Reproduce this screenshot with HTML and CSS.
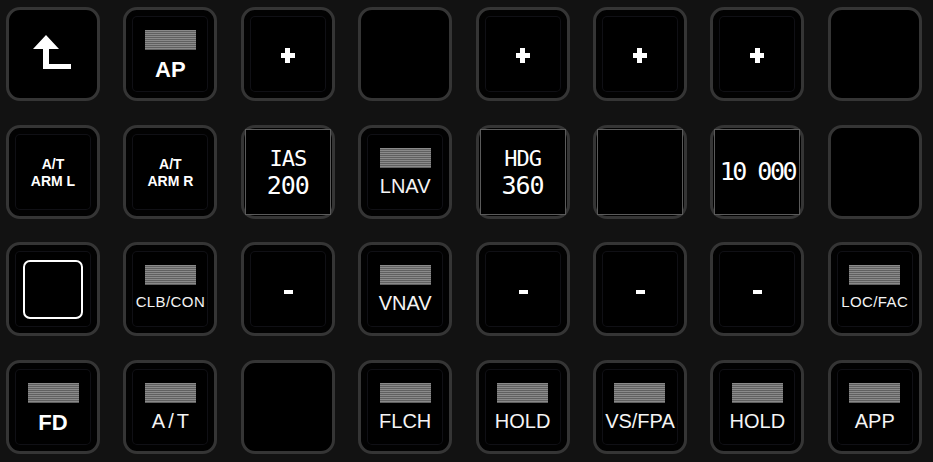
FILE: index.html
```html
<!DOCTYPE html>
<html lang="en">
  <head>
    <meta charset="UTF-8" />
    <meta name="viewport" content="width=device-width, initial-scale=1.0" />
    <title>Autopilot Deck</title>
    <link rel="stylesheet" href="styles.css">
  </head>
  <body>
    <div class="deck">
      <!-- row 1 -->
      <div class="key key-center">
        <svg class="icon-back" viewBox="0 0 88 88" width="88" height="88">
          <path d="M37 25 L50 39 L40 39 L40 54 L62 54 L62 59 L34 59 L34 39 L24 39 Z" fill="#fff" />
        </svg>
      </div>
      <div class="key key-lit">
        <div class="stripe"></div>
        <span class="label label-bold">AP</span>
      </div>
      <div class="key key-lit key-center"><span class="sign sign-plus"></span></div>
      <div class="key"></div>
      <div class="key key-lit key-center"><span class="sign sign-plus"></span></div>
      <div class="key key-lit key-center"><span class="sign sign-plus"></span></div>
      <div class="key key-lit key-center"><span class="sign sign-plus"></span></div>
      <div class="key"></div>

      <!-- row 2 -->
      <div class="key key-lit key-center">
        <span class="small">A/T<br>ARM L</span>
      </div>
      <div class="key key-lit key-center">
        <span class="small">A/T<br>ARM R</span>
      </div>
      <div class="key key-center">
        <div class="screen">
          <span class="seg seg-top">IAS</span>
          <span class="seg">200</span>
        </div>
      </div>
      <div class="key key-lit">
        <div class="stripe"></div>
        <span class="label">LNAV</span>
      </div>
      <div class="key key-center">
        <div class="screen">
          <span class="seg seg-top">HDG</span>
          <span class="seg">360</span>
        </div>
      </div>
      <div class="key key-center">
        <div class="screen"></div>
      </div>
      <div class="key key-center">
        <div class="screen">
          <span class="seg seg-wide">10 000</span>
        </div>
      </div>
      <div class="key"></div>

      <!-- row 3 -->
      <div class="key key-lit key-center"><div class="box"></div></div>
      <div class="key key-lit">
        <div class="stripe"></div>
        <span class="label label-mid">CLB/CON</span>
      </div>
      <div class="key key-lit key-center"><span class="sign sign-minus"></span></div>
      <div class="key key-lit">
        <div class="stripe"></div>
        <span class="label">VNAV</span>
      </div>
      <div class="key key-lit key-center"><span class="sign sign-minus"></span></div>
      <div class="key key-lit key-center"><span class="sign sign-minus"></span></div>
      <div class="key key-lit key-center"><span class="sign sign-minus"></span></div>
      <div class="key key-lit">
        <div class="stripe"></div>
        <span class="label label-mid">LOC/FAC</span>
      </div>

      <!-- row 4 -->
      <div class="key key-lit">
        <div class="stripe"></div>
        <span class="label label-bold">FD</span>
      </div>
      <div class="key key-lit">
        <div class="stripe"></div>
        <span class="label label-spaced">A/T</span>
      </div>
      <div class="key"></div>
      <div class="key key-lit">
        <div class="stripe"></div>
        <span class="label">FLCH</span>
      </div>
      <div class="key key-lit">
        <div class="stripe"></div>
        <span class="label">HOLD</span>
      </div>
      <div class="key key-lit">
        <div class="stripe"></div>
        <span class="label">VS/FPA</span>
      </div>
      <div class="key key-lit">
        <div class="stripe"></div>
        <span class="label">HOLD</span>
      </div>
      <div class="key key-lit">
        <div class="stripe"></div>
        <span class="label">APP</span>
      </div>
    </div>
  </body>
</html>
```

FILE: styles.css
```css
* {
  margin: 0;
  padding: 0;
  box-sizing: border-box;
}

body {
  background: #121212;
  font-family: "Liberation Sans", Arial, sans-serif;
  color: #fff;
  width: 933px;
  height: 462px;
  overflow: hidden;
}

.deck {
  display: grid;
  grid-template-columns: repeat(8, 94px);
  grid-auto-rows: 94px;
  column-gap: 23.4px;
  row-gap: 23.6px;
  padding: 7px 0 0 6px;
}

.key {
  display: flex;
  flex-direction: column;
  align-items: center;
  background: #000;
  border: 3px solid #353535;
  border-radius: 14px;
  padding-top: 20px;
}

.key-lit {
  box-shadow: inset 0 0 0 6px #020202, inset 0 0 0 7px #101015;
}

.key-center {
  justify-content: center;
  padding-top: 0;
}

/* striped status lamp */
.stripe {
  width: 51px;
  height: 20px;
  background: repeating-linear-gradient(
    to bottom,
    #8a8a8a 0,
    #8a8a8a 1px,
    #606060 1px,
    #606060 2px
  );
}

.label {
  margin-top: 6px;
  font-size: 20px;
  line-height: 24px;
  color: #f4f4f4;
}

.label-bold {
  margin-top: 8px;
  font-size: 22px;
  font-weight: bold;
  color: #fff;
}

.label-mid {
  margin-top: 5px;
  font-size: 15px;
  letter-spacing: 0.4px;
}

.label-spaced {
  letter-spacing: 3px;
  margin-left: 3px;
}

.small {
  font-size: 14px;
  font-weight: bold;
  line-height: 17px;
  text-align: center;
  margin-top: 2px;
}

.icon-back {
  display: block;
}

.sign {
  display: block;
}

.sign-plus {
  width: 14px;
  height: 15px;
  margin-top: 2px;
  background:
    linear-gradient(#fff, #fff) center / 14px 5px no-repeat,
    linear-gradient(#fff, #fff) center / 5px 15px no-repeat;
}

.sign-minus {
  width: 9px;
  height: 4px;
  margin-top: 6px;
  margin-left: 1px;
  background: #fff;
}

.box {
  width: 60px;
  height: 59px;
  border: 2px solid #fff;
  border-radius: 7px;
}

/* square LCD panel for values */
.screen {
  width: 86px;
  height: 86px;
  background: #000;
  border: 1px solid #5a5a5a;
  display: flex;
  flex-direction: column;
  align-items: center;
  justify-content: center;
}

.seg {
  font-family: "DejaVu Sans Mono", monospace;
  font-size: 25px;
  line-height: 27px;
  letter-spacing: -1px;
  color: #fff;
}

.seg-top {
  font-size: 22px;
  line-height: 27px;
}

.seg-wide {
  font-size: 25px;
  letter-spacing: -2.5px;
}
```
